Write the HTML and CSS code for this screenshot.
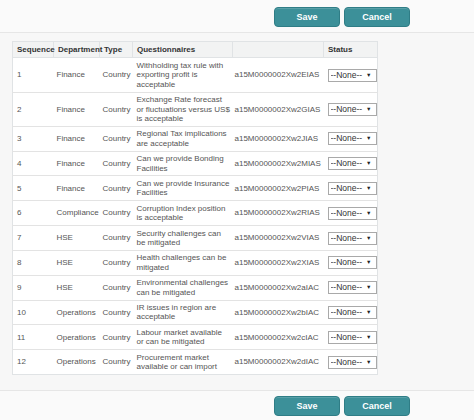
FILE: index.html
```html
<!DOCTYPE html>
<html lang="en">
<head>
    <meta charset="UTF-8">
    <title>Questionnaires</title>
    <link rel="stylesheet" href="styles.css">
</head>
<body>
    <div class="button-bar top">
        <button class="btn">Save</button>
        <button class="btn">Cancel</button>
    </div>

    <div class="block-body">
        <table class="q-table">
            <colgroup>
                <col class="c-seq">
                <col class="c-dept">
                <col class="c-type">
                <col class="c-quest">
                <col class="c-id">
                <col class="c-status">
            </colgroup>
            <thead>
                <tr>
                    <th>Sequence</th>
                    <th>Department</th>
                    <th>Type</th>
                    <th>Questionnaires</th>
                    <th class="id"></th>
                    <th>Status</th>
                </tr>
            </thead>
            <tbody>
                <tr>
                    <td>1</td><td>Finance</td><td>Country</td>
                    <td>Withholding tax rule with exporting profit is acceptable</td>
                    <td class="id">a15M0000002Xw2EIAS</td>
                    <td><span class="pick"><select><option>--None--</option></select></span></td>
                </tr>
                <tr>
                    <td>2</td><td>Finance</td><td>Country</td>
                    <td>Exchange Rate forecast or fluctuations versus US$ is acceptable</td>
                    <td class="id">a15M0000002Xw2GIAS</td>
                    <td><span class="pick"><select><option>--None--</option></select></span></td>
                </tr>
                <tr>
                    <td>3</td><td>Finance</td><td>Country</td>
                    <td>Regional Tax implications are acceptable</td>
                    <td class="id">a15M0000002Xw2JIAS</td>
                    <td><span class="pick"><select><option>--None--</option></select></span></td>
                </tr>
                <tr>
                    <td>4</td><td>Finance</td><td>Country</td>
                    <td>Can we provide Bonding Facilities</td>
                    <td class="id">a15M0000002Xw2MIAS</td>
                    <td><span class="pick"><select><option>--None--</option></select></span></td>
                </tr>
                <tr>
                    <td>5</td><td>Finance</td><td>Country</td>
                    <td>Can we provide Insurance Facilities</td>
                    <td class="id">a15M0000002Xw2PIAS</td>
                    <td><span class="pick"><select><option>--None--</option></select></span></td>
                </tr>
                <tr>
                    <td>6</td><td>Compliance</td><td>Country</td>
                    <td>Corruption Index position is acceptable</td>
                    <td class="id">a15M0000002Xw2RIAS</td>
                    <td><span class="pick"><select><option>--None--</option></select></span></td>
                </tr>
                <tr>
                    <td>7</td><td>HSE</td><td>Country</td>
                    <td>Security challenges can be mitigated</td>
                    <td class="id">a15M0000002Xw2VIAS</td>
                    <td><span class="pick"><select><option>--None--</option></select></span></td>
                </tr>
                <tr>
                    <td>8</td><td>HSE</td><td>Country</td>
                    <td>Health challenges can be mitigated</td>
                    <td class="id">a15M0000002Xw2XIAS</td>
                    <td><span class="pick"><select><option>--None--</option></select></span></td>
                </tr>
                <tr>
                    <td>9</td><td>HSE</td><td>Country</td>
                    <td>Environmental challenges can be mitigated</td>
                    <td class="id">a15M0000002Xw2aIAC</td>
                    <td><span class="pick"><select><option>--None--</option></select></span></td>
                </tr>
                <tr>
                    <td>10</td><td>Operations</td><td>Country</td>
                    <td>IR issues in region are acceptable</td>
                    <td class="id">a15M0000002Xw2bIAC</td>
                    <td><span class="pick"><select><option>--None--</option></select></span></td>
                </tr>
                <tr>
                    <td>11</td><td>Operations</td><td>Country</td>
                    <td>Labour market available or can be mitigated</td>
                    <td class="id">a15M0000002Xw2cIAC</td>
                    <td><span class="pick"><select><option>--None--</option></select></span></td>
                </tr>
                <tr>
                    <td>12</td><td>Operations</td><td>Country</td>
                    <td>Procurement market available or can import</td>
                    <td class="id">a15M0000002Xw2dIAC</td>
                    <td><span class="pick"><select><option>--None--</option></select></span></td>
                </tr>
            </tbody>
        </table>
    </div>

    <div class="button-bar bottom">
        <button class="btn">Save</button>
        <button class="btn">Cancel</button>
    </div>
</body>
</html>
```

FILE: styles.css
```css
body {
    margin: 0;
    font-family: "Liberation Sans", Arial, sans-serif;
    background-color: #f7f7f7;
    color: #555;
}

/* Button rows above and below the table */
.button-bar {
    display: flex;
    gap: 4px;
    padding-left: 274px;
}
.button-bar.top {
    height: 33px;
    padding-top: 7px;
    box-sizing: border-box;
    border-bottom: 1px solid #e6e6e6;
    background-color: #fafafa;
}
.button-bar.bottom {
    padding-top: 5px;
    border-top: 1px solid #e6e6e6;
    background-color: #fafafa;
    height: 31px;
}

.btn {
    width: 66px;
    height: 20px;
    padding: 0;
    border: 1px solid #2f7d86;
    border-radius: 4px;
    background-color: #3c9099;
    color: #fff;
    font-family: inherit;
    font-size: 9px;
    font-weight: bold;
    box-shadow: inset 0 1px 0 rgba(255,255,255,0.15);
}

.block-body {
    padding: 8px 0 15px 12px;
}

/* Table */
.q-table {
    width: 365px;
    table-layout: fixed;
    border-collapse: collapse;
    border: 1px solid #e0e3e5;
    background-color: #fff;
    font-size: 8px;
}
.c-seq { width: 41px; }
.c-dept { width: 46px; }
.c-type { width: 33px; }
.c-quest { width: 100px; }
.c-id { width: 91px; }
.c-status { width: 54px; }

.q-table th {
    padding: 3px 2px 3px 4px;
    line-height: 9.4px;
    text-align: left;
    font-weight: bold;
    color: #333;
    background-color: #f2f3f3;
    border-bottom: 1px solid #e0e3e5;
    border-left: 1px solid #e0e3e5;
}
.q-table th:first-child { border-left: none; }

.q-table td {
    padding: 2.5px 2px 2.5px 4px;
    line-height: 9.4px;
    vertical-align: middle;
    border-top: 1px solid #e3e3e3;
}
.q-table td:nth-child(2),
.q-table td:nth-child(3) { padding-left: 3px; }
.q-table .id { padding-left: 2px; }

/* Picklist */
.pick {
    position: relative;
    display: inline-block;
}
.pick select {
    appearance: none;
    -webkit-appearance: none;
    width: 49px;
    height: 13px;
    margin: 0;
    padding: 0 0 0 2px;
    border: 1px solid #a9a9a9;
    border-radius: 0;
    background-color: #fff;
    color: #333;
    font-family: inherit;
    font-size: 8.5px;
    line-height: 11px;
}
.pick::after {
    content: "\25BC";
    position: absolute;
    right: 5px;
    top: 4px;
    font-size: 5.5px;
    line-height: 5px;
    color: #222;
    pointer-events: none;
}
```
